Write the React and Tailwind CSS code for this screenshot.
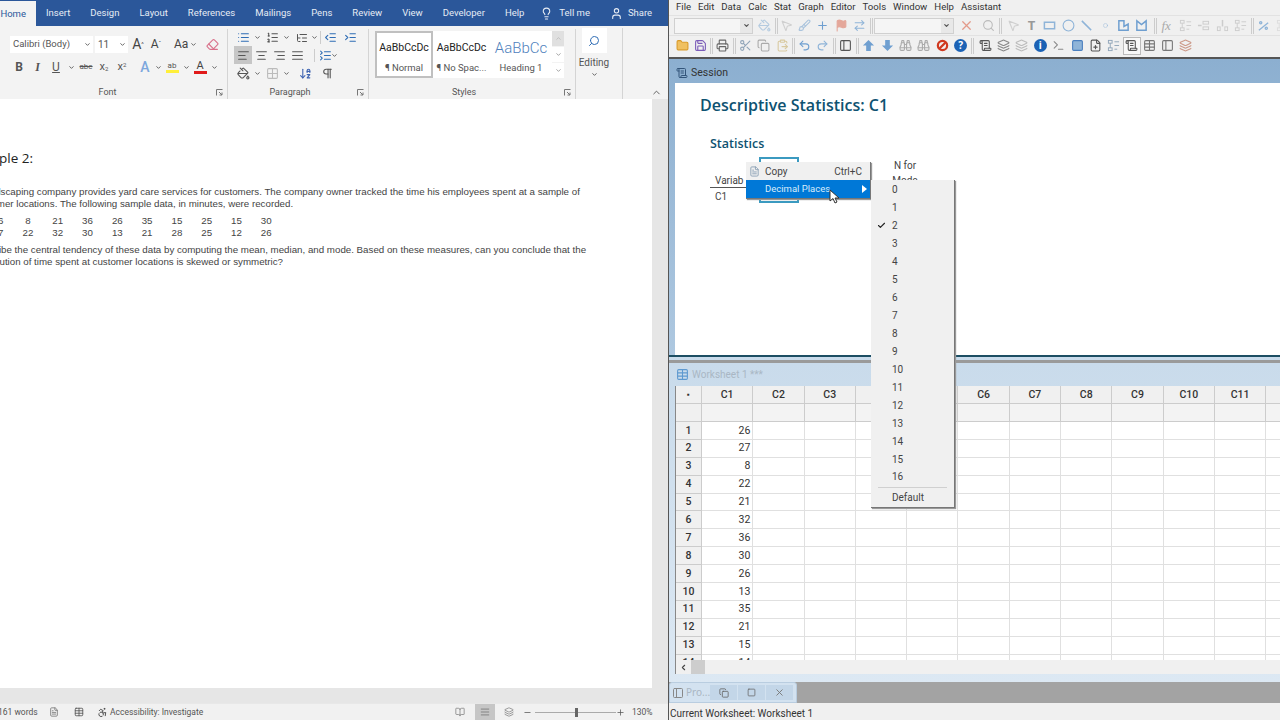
import { AlignCenter, AlignJustify, AlignLeft, AlignRight, ArrowDownAZ, BookOpen, ChevronDown, ChevronLeft, ChevronUp, Circle, ClipboardPaste, Copy, FilePlus, FileText, Folder, Grid2x2, Lightbulb, List, ListOrdered, ListTree, Minus, MousePointer2, PaintBucket, Pilcrow, Plus, Printer, Redo2, Save, Scissors, Search, Square, Table, Undo2, User, X, Flag, ArrowRightLeft, Brush, Binoculars, ScrollText, Layers, PanelLeft, Eraser, Check, IndentDecrease, IndentIncrease, ListCollapse, Accessibility, Terminal } from 'lucide-react';

const word = "font-['Roboto',sans-serif]";

const Caret = ({ w = 'w-[12px]', className = '' }) => <span className={`${w} ${className} flex justify-center text-[#555]`}><ChevronDown size={7} strokeWidth={3} /></span>;

const Launcher = () => (
  <svg width="7" height="7" viewBox="0 0 7 7" className="text-[#777]"><path d="M0.5 0.5h6M0.5 0.5v6M3 3l3 3M6 3.5V6H3.5" fill="none" stroke="currentColor" /></svg>
);

function RibbonIcon({ children, w = 'w-[18px]', active, className = '' }) {
  return <span className={`${w} ${className} h-[18px] flex items-center justify-center text-[#555] ${active ? 'bg-[#c6c6c6]' : ''}`}>{children}</span>;
}

function FontGroup() {
  return (
    <div className="w-[228px] shrink-0 flex flex-col border-r border-[#d4d4d4] mt-[3px] relative">
      <div className="flex items-center pl-[10px] pt-[4px] h-[26px]">
        <div className="w-[83px] h-[17px] bg-white flex items-center justify-between pl-[3px] text-[9.5px] text-[#555]">Calibri (Body)<Caret /></div>
        <div className="ml-[2px] w-[33px] h-[17px] bg-white flex items-center justify-between pl-[3px] text-[10px] text-[#555]">11<Caret /></div>
        <span className="ml-[1px] w-[18px] text-center text-[14px] text-[#444]">A<sup className="text-[6px]">^</sup></span>
        <span className="w-[18px] text-center text-[12px] text-[#444]">A<sup className="text-[6px]">ˇ</sup></span>
        <span className="ml-[9px] w-[15px] text-[12px] text-[#444]">Aa</span>
        <Caret w="w-[8px]" />
        <span className="ml-[4px] w-[22px] flex justify-center text-[#d9708a]"><Eraser size={13} /></span>
      </div>
      <div className="flex items-center pl-[10px] h-[24px] text-[#444]">
        <RibbonIcon><b className="text-[12px]">B</b></RibbonIcon>
        <RibbonIcon w="w-[19px]"><i className="text-[12px] font-['Liberation_Serif',serif] font-bold">I</i></RibbonIcon>
        <RibbonIcon><u className="text-[12px]">U</u></RibbonIcon>
        <Caret />
        <RibbonIcon><s className="text-[8px]">abc</s></RibbonIcon>
        <RibbonIcon><span className="text-[11px]">x<sub className="text-[6px]">2</sub></span></RibbonIcon>
        <RibbonIcon><span className="text-[11px]">x<sup className="text-[6px]">2</sup></span></RibbonIcon>
        <span className="ml-[7px] w-[14px] text-center text-[14px] font-medium text-[#7da7dd]">A</span>
        <Caret />
        <span className="w-[16px] flex flex-col items-center text-[8px] leading-[9px] text-[#555]">ab<span className="w-[13px] h-[3px] bg-[#ffef3a]" /></span>
        <Caret />
        <span className="w-[16px] flex flex-col items-center text-[11px] leading-[11px] text-[#444]">A<span className="w-[13px] h-[3px] bg-[#e01a1a]" /></span>
        <Caret />
      </div>
      <div className="mt-auto flex justify-center items-center h-[14px] pt-[2px] text-[9px] text-[#555] pr-[12px]">Font</div>
      <span className="absolute right-[4px] bottom-[3px]"><Launcher /></span>
    </div>
  );
}

function ParagraphGroup() {
  return (
    <div className="w-[141px] shrink-0 flex flex-col border-r border-[#d4d4d4] mt-[3px] relative">
      <div className="flex items-center pl-[6px] h-[17px]">
        <RibbonIcon><List size={13} className="text-[#2f6db5]" /></RibbonIcon><Caret w="w-[10px]" />
        <RibbonIcon className="ml-[1px]"><ListOrdered size={13} /></RibbonIcon><Caret w="w-[10px]" />
        <RibbonIcon w="w-[14px]" className="ml-[4px]"><ListTree size={12} /></RibbonIcon><Caret w="w-[10px]" />
        <span className="ml-[1px] w-px h-[13px] bg-[#ccc]" />
        <RibbonIcon><IndentDecrease size={13} className="text-[#2f6db5]" /></RibbonIcon>
        <RibbonIcon w="w-[22px]"><IndentIncrease size={13} className="text-[#2f6db5]" /></RibbonIcon>
      </div>
      <div className="flex items-center pl-[6px] h-[18px]">
        <RibbonIcon active><AlignLeft size={13} /></RibbonIcon>
        <RibbonIcon><AlignCenter size={13} /></RibbonIcon>
        <RibbonIcon><AlignRight size={13} /></RibbonIcon>
        <RibbonIcon><AlignJustify size={13} /></RibbonIcon>
        <span className="ml-[8px] w-px h-[13px] bg-[#ccc]" />
        <RibbonIcon w="w-[20px]"><ListCollapse size={13} className="text-[#2f6db5]" /></RibbonIcon>
        <Caret w="w-[10px]" className="-ml-[6px]" />
      </div>
      <div className="flex items-center pl-[6px] h-[18px]">
        <RibbonIcon><PaintBucket size={13} /></RibbonIcon><Caret w="w-[10px]" />
        <RibbonIcon className="ml-[1px]"><Grid2x2 size={13} className="text-[#bbb]" /></RibbonIcon><Caret w="w-[10px]" />
        <RibbonIcon className="ml-[5px]"><ArrowDownAZ size={13} className="text-[#3c62b0]" /></RibbonIcon>
        <RibbonIcon w="w-[26px]"><Pilcrow size={13} /></RibbonIcon>
      </div>
      <div className="mt-auto flex justify-center items-center h-[14px] pt-[2px] text-[9px] text-[#555] pr-[16px]">Paragraph</div>
      <span className="absolute right-[4px] bottom-[3px]"><Launcher /></span>
    </div>
  );
}

function StyleTile({ sample, label, selected, heading, width }) {
  return (
    <div className={`${width} h-full pt-[4px] bg-white flex flex-col items-center justify-center gap-[5px] overflow-hidden ${selected ? 'border-[2px] border-[#c0c0c0]' : ''}`}>
      <span className={heading ? 'text-[15px] leading-[18px] text-[#4f81bd] font-light' : 'text-[10.5px] leading-[18px] text-[#222]'}>{sample}</span>
      <span className="text-[9.5px] leading-[12px] text-[#555] whitespace-nowrap">{label}</span>
    </div>
  );
}

function StylesGroup() {
  return (
    <div className="w-[207px] shrink-0 flex flex-col border-r border-[#d4d4d4] mt-[3px] relative pl-[6px]">
      <div className="flex h-[47px] mt-[2px]">
        <StyleTile selected sample="AaBbCcDc" label="¶ Normal" width="w-[58px]" />
        <StyleTile sample="AaBbCcDc" label="¶ No Spac..." width="w-[57px]" />
        <StyleTile heading sample="AaBbCc" label="Heading 1" width="w-[62px]" />
        <div className="w-[12px] flex flex-col gap-px text-[#666]">
          <span className="flex-1 bg-[#e0e0e0] flex items-center justify-center"><ChevronUp size={7} className="text-[#aaa]" /></span>
          <span className="flex-1 bg-white flex items-center justify-center"><ChevronDown size={7} /></span>
          <span className="flex-1 bg-white flex items-center justify-center"><ChevronDown size={7} /></span>
        </div>
      </div>
      <div className="mt-auto flex justify-center items-center h-[14px] pt-[2px] text-[9px] text-[#555] pr-[22px]">Styles</div>
      <span className="absolute right-[4px] bottom-[3px]"><Launcher /></span>
    </div>
  );
}

function WordPane() {
  const tabs = ['Insert', 'Design', 'Layout', 'References', 'Mailings', 'Pens', 'Review', 'View', 'Developer', 'Help'];
  const row1 = ['26', '8', '21', '36', '26', '35', '15', '25', '15', '30'];
  const row2 = ['27', '22', '32', '30', '13', '21', '28', '25', '12', '26'];
  const dataRow = (vals) => (
    <div className="pl-[26.5px] flex">
      <span className="-ml-[17px] w-[30px] text-center">{vals[0]}</span>
      {vals.slice(1).map((v, i) => <span key={i} className="w-[29.8px] text-center">{v}</span>)}
    </div>
  );
  return (
    <div className={`w-[668px] shrink-0 h-full flex flex-col bg-[#e6e6e6] ${word}`}>
      <div className="h-[26px] shrink-0 bg-[#2b579a] flex items-center text-[9.5px] text-[#e6ecf5] whitespace-nowrap">
        <div className="w-[36px] h-full mt-[2px] mr-[10px] bg-[#f3f3f3] text-[#2b579a] flex items-center justify-end pr-[10px]">Home</div>
        <div className="flex gap-[20px]">{tabs.map((t) => <span key={t}>{t}</span>)}</div>
        <Lightbulb size={13} className="ml-[16px]" />
        <span className="ml-[6px]">Tell me</span>
        <User size={13} className="ml-[20px]" />
        <span className="ml-[5px]">Share</span>
      </div>
      <div className="h-[73px] shrink-0 bg-[#f3f3f3] flex">
        <FontGroup />
        <ParagraphGroup />
        <StylesGroup />
        <div className="w-[47px] shrink-0 flex flex-col items-center mt-[2px] border-r border-[#d4d4d4] pr-[10px]">
          <span className="w-[25px] h-[25px] bg-white flex items-center justify-center text-[#2f6db5]"><Search size={12} className="-scale-x-100" /></span>
          <span className="text-[10px] text-[#555] mt-[2px]">Editing</span>
          <ChevronDown size={7} strokeWidth={3} className="mt-[1px] text-[#555]" />
        </div>
        <div className="flex-1 flex items-end justify-start pl-[28px] pb-[1px] text-[#555]"><ChevronUp size={11} /></div>
      </div>
      <div className="flex-1 flex min-h-0">
        <div className="w-[652px] bg-white overflow-hidden whitespace-nowrap text-[#444] font-['Liberation_Sans',sans-serif] text-[9.74px] leading-[12px]">
          <div className="-ml-[26.5px] pt-[50px]">
            <div className="-ml-[9px] font-['Open_Sans',sans-serif] text-[13.5px] leading-[18px] text-[#222] mb-[19px]">Example 2:</div>
            <div>A landscaping company provides yard care services for customers. The company owner tracked the time his employees spent at a sample of</div>
            <div>customer locations. The following sample data, in minutes, were recorded.</div>
            <div className="mt-[5px]">{dataRow(row1)}{dataRow(row2)}</div>
            <div className="mt-[5px]">Describe the central tendency of these data by computing the mean, median, and mode. Based on these measures, can you conclude that the</div>
            <div>distribution of time spent at customer locations is skewed or symmetric?</div>
          </div>
        </div>
      </div>
      <div className="h-[15px] shrink-0 bg-[#e6e6e6]" />
      <div className="h-[17px] shrink-0 bg-[#f1f1f1] flex items-center text-[8.5px] text-[#555] whitespace-nowrap border-t border-[#e8e8e8]">
        <span className="-ml-[2px] w-[40px]">161 words</span>
        <FileText size={10} className="ml-[11px] text-[#777]" />
        <Table size={10} className="ml-[15px] text-[#555]" />
        <Accessibility size={11} className="ml-[13px] text-[#444]" />
        <span className="ml-[2px] w-[92px]">Accessibility: Investigate</span>
        <BookOpen size={10} className="ml-[253px] text-[#888]" />
        <span className="ml-[10px] w-[20px] h-full bg-[#c6c6c6] flex items-center justify-center"><AlignJustify size={10} className="text-[#777]" /></span>
        <Layers size={10} className="ml-[9px] text-[#888]" />
        <Minus size={9} className="ml-[9px] text-[#555]" />
        <span className="ml-[3px] w-[81px] h-px bg-[#aaa] relative"><span className="absolute left-[40px] -top-[4px] w-[3px] h-[9px] bg-[#666]" /></span>
        <Plus size={9} className="text-[#555]" />
        <span className="ml-[7px]">130%</span>
      </div>
    </div>
  );
}

function ArrowFill({ size, down }) {
  return <svg width={size} height={size} viewBox="0 0 14 14" fill="currentColor" className={down ? 'rotate-180' : ''}><path d="M7 1l6 6H9.5v6h-5V7H1z" /></svg>;
}
const ArrowUpFill = ({ size }) => <ArrowFill size={size} />;
const ArrowDownFill = ({ size }) => <ArrowFill size={size} down />;

function LShape({ size }) {
  return <svg width={size} height={size} viewBox="0 0 14 14" fill="none" stroke="currentColor" strokeWidth="1.6"><path d="M2 2v10h10V5.5L7.5 8V2z" /></svg>;
}
function MShape({ size }) {
  return <svg width={size} height={size} viewBox="0 0 14 14" fill="none" stroke="currentColor" strokeWidth="1.6"><path d="M2 2l5 4 5-4v10H2z" /></svg>;
}
function RectShape({ size }) {
  return <svg width={size} height={size} viewBox="0 0 14 14" fill="none" stroke="currentColor" strokeWidth="1.6"><rect x="1.5" y="3.5" width="11" height="7" /></svg>;
}
function LineShape({ size }) {
  return <svg width={size} height={size} viewBox="0 0 14 14" stroke="currentColor" strokeWidth="1.6"><path d="M2 2l10 10" /></svg>;
}
function Tree({ size }) {
  return <svg width={size} height={size} viewBox="0 0 14 14" fill="none" stroke="currentColor"><rect x="1.5" y="1.5" width="4" height="3" /><rect x="1.5" y="9.5" width="4" height="3" /><path d="M3.5 4.5v5M8 3h5M8 7h5M8 11h3" /></svg>;
}
function Dash({ size }) {
  return <svg width={size} height={size} viewBox="0 0 14 14" fill="none" stroke="currentColor"><path d="M1 7h4" strokeWidth="1.6" /><rect x="6.5" y="2.5" width="6" height="3" /><rect x="6.5" y="8.5" width="6" height="3" /></svg>;
}
function Bars({ size }) {
  return <svg width={size} height={size} viewBox="0 0 14 14" fill="none" stroke="currentColor"><path d="M7 1v7" strokeWidth="1.6" /><rect x="1.5" y="8.5" width="3" height="4" /><rect x="9.5" y="8.5" width="3" height="4" /></svg>;
}
function Stop({ size }) {
  return <svg width={size} height={size} viewBox="0 0 14 14" fill="none" stroke="currentColor" strokeWidth="2.4"><circle cx="7" cy="7" r="5" /><path d="M3.5 10.5l7-7" /></svg>;
}
function Trend({ size }) {
  return <svg width={size} height={size} viewBox="0 0 14 14" fill="none" stroke="currentColor" strokeWidth="1.4"><path d="M2 12L12 4" /><circle cx="4" cy="4" r="1.2" /><circle cx="10" cy="10" r="1.2" /></svg>;
}

function Tool({ icon: Icon, c = 'text-[#8fb4d8]', w = 'w-[18.4px]', sel, size = 13, fill = 'none' }) {
  return <span className={`${w} shrink-0 h-[18px] flex items-center justify-center ${c} ${sel ? 'border border-[#bbb] bg-[#f8f8f8]' : ''}`}><Icon size={size} fill={fill} /></span>;
}

function DotGlyph({ t, bg }) {
  return <span className="w-[18.4px] shrink-0 flex justify-center"><span className={`${bg} w-[13px] h-[13px] rounded-full text-white text-[10px] leading-[13px] font-bold text-center`}>{t}</span></span>;
}

const Sep = ({ w = 'w-[8px]' }) => <span className={`${w} shrink-0 flex justify-center`}><span className="shrink-0 w-[3px] h-[16px] border-x border-[#ccc]" /></span>;

function ToolCombo({ width }) {
  return <div className={`${width} shrink-0 h-[16px] bg-[#f5f5f5] border border-[#d0d0d0] flex justify-end items-center`}><span className="w-[12px] h-full bg-[#e8e8e8] flex items-center justify-center"><ChevronDown size={7} strokeWidth={4} className="text-[#555]" /></span></div>;
}

const Gl = ({ t, className = '' }) => <span className={`shrink-0 ${className}`}>{t}</span>;

function MinitabToolbars() {
  return (
    <div className="bg-[#f0f0f0] shrink-0 pb-[2px]">
      <div className="h-[15px] flex items-center gap-[7px] pl-[7px] text-[9.6px] text-[#333] font-['Roboto',sans-serif] whitespace-nowrap">
        {['File', 'Edit', 'Data', 'Calc', 'Stat', 'Graph', 'Editor', 'Tools', 'Window', 'Help', 'Assistant'].map((m) => <span key={m}>{m}</span>)}
      </div>
      <div className="h-[20px] flex items-center pl-[5px] border-t border-[#e2e2e2] overflow-hidden">
        <ToolCombo width="w-[79px]" />
        <Tool icon={PaintBucket} c="text-[#b4cbe0]" w="w-[22px]" />
        <Sep w="w-[2px]" />
        <Tool icon={MousePointer2} c="text-[#cfcfcf]" />
        <Tool icon={Brush} c="text-[#a9c3dc]" />
        <Tool icon={Plus} c="text-[#6f9fd0]" />
        <Tool icon={Flag} c="text-[#e4a79a]" fill="#e4a79a" />
        <Tool icon={ArrowRightLeft} c="text-[#8fb4d8]" />
        <Sep w="w-[5px]" />
        <ToolCombo width="w-[80px]" />
        <Tool icon={X} c="text-[#e39a8a]" w="w-[26px]" size={15} />
        <Tool icon={Search} c="text-[#bbb]" w="w-[18px]" />
        <Sep w="w-[6px]" />
        <Tool icon={MousePointer2} c="text-[#cfcfcf]" />
        <Gl t="T" className="w-[18.4px] text-[13px] text-center text-[#999] font-bold" />
        <Tool icon={RectShape} c="text-[#8fb4d8]" />
        <Tool icon={Circle} c="text-[#8fb4d8]" />
        <Tool icon={LineShape} c="text-[#8fb4d8]" />
        <Tool icon={Circle} c="text-[#8fb4d8]" size={5} />
        <Tool icon={LShape} c="text-[#6f9fd0]" />
        <Tool icon={MShape} c="text-[#6f9fd0]" />
        <Sep />
        <Gl t="fx" className="w-[14px] text-[13px] text-center italic text-[#aaa] font-['Liberation_Serif',serif]" />
        <span className="w-[3px] shrink-0" />
        <Tool icon={Tree} c="text-[#ccc]" />
        <Tool icon={Dash} c="text-[#ccc]" />
        <Tool icon={Bars} c="text-[#ccc]" />
        <Tool icon={Tree} c="text-[#ccc]" />
        <Sep w="w-[5px]" />
        <Tool icon={Trend} c="text-[#8fb4d8]" />
        <Tool icon={Tree} c="text-[#ddd]" />
        <Tool icon={Dash} c="text-[#ddd]" />
      </div>
      <div className="h-[20px] flex items-center pl-[4px] border-t border-[#e2e2e2]">
        <Tool icon={Folder} c="text-[#d99a28]" fill="#f0c060" />
        <Tool icon={Save} c="text-[#7a5bb8]" />
        <Sep w="w-[4px]" />
        <Tool icon={Printer} c="text-[#666]" />
        <Sep w="w-[4px]" />
        <Tool icon={Scissors} c="text-[#8fa4b8]" />
        <Tool icon={Copy} c="text-[#aaa]" />
        <Tool icon={ClipboardPaste} c="text-[#d8c9a0]" />
        <Sep w="w-[4px]" />
        <Tool icon={Undo2} c="text-[#6f9fd0]" />
        <Tool icon={Redo2} c="text-[#8fb4d8]" />
        <Sep w="w-[4px]" />
        <Tool icon={PanelLeft} c="text-[#555]" />
        <Sep w="w-[5px]" />
        <Tool icon={ArrowUpFill} c="text-[#6f9fd0]" />
        <Tool icon={ArrowDownFill} c="text-[#6f9fd0]" />
        <Tool icon={Binoculars} c="text-[#aaa]" />
        <Tool icon={Binoculars} c="text-[#aaa]" />
        <Tool icon={Stop} c="text-[#d03a20]" />
        <DotGlyph t="?" bg="bg-[#1b62b5]" />
        <Sep w="w-[6px]" />
        <Tool icon={ScrollText} c="text-[#555]" />
        <Tool icon={Layers} c="text-[#888]" />
        <Tool icon={Layers} c="text-[#bbb]" />
        <DotGlyph t="i" bg="bg-[#1b62b5]" />
        <Tool icon={Terminal} c="text-[#888]" />
        <Tool icon={Square} c="text-[#4a7fbf]" fill="#8fb4d8" />
        <Tool icon={FilePlus} c="text-[#555]" />
        <Tool icon={Tree} c="text-[#8fa4b8]" w="w-[18px]" />
        <Tool icon={ScrollText} c="text-[#555]" w="w-[18px]" sel />
        <Tool icon={Table} c="text-[#777]" w="w-[18px]" />
        <Tool icon={PanelLeft} c="text-[#777]" w="w-[18px]" />
        <Tool icon={Layers} c="text-[#c98]" w="w-[18px]" />
      </div>
    </div>
  );
}

function SessionWindow() {
  return (
    <div className="h-[298px] shrink-0 flex flex-col bg-gradient-to-b from-[#8cafd0] to-[#aec8e0] border-t-[2px] border-[#555] pl-[6px] relative">
      <div className="h-[24px] shrink-0 pt-[3px] pl-[1px] flex items-center text-[10.5px] text-[#333] font-['Roboto',sans-serif]">
        <ScrollText size={12} className="text-[#33557a] mr-[3px]" />Session
      </div>
      <div className="flex-1 bg-white pl-[25px] pt-[12px] relative overflow-hidden font-['Open_Sans',sans-serif]">
        <div className="text-[16px] leading-[20px] font-semibold text-[#0e5271]">Descriptive Statistics: C1</div>
        <div className="ml-[10px] mt-[21px] text-[12.5px] leading-[16px] font-semibold text-[#0e5271]">Statistics</div>
        <div className="ml-[10px] mt-[6px] text-[10px] leading-[15px] text-[#444] flex font-['Roboto',sans-serif]">
          <div className="w-[175px] pt-[15px]">
            <div className="pl-[5px] border-b border-[#555] w-[48px] h-[15px]">Variab</div>
            <div className="pl-[5px] mt-[1px]">C1</div>
          </div>
          <div className="w-[40px] text-center">N for<br />Mode</div>
        </div>
      </div>
    </div>
  );
}

function Worksheet() {
  const cols = ['C1', 'C2', 'C3', 'C4', 'C5', 'C6', 'C7', 'C8', 'C9', 'C10', 'C11', 'C12'];
  const data = [26, 27, 8, 22, 21, 32, 36, 30, 26, 13, 35, 21, 15, 14];
  return (
    <div className="flex-1 min-h-0 flex flex-col bg-gradient-to-b from-[#c9dbeb] to-[#dce8f3] border-t-[3px] border-[#9a9a9a] pl-[6px] pb-[8px] font-['Roboto',sans-serif]">
      <div className="h-[23px] shrink-0 pb-[1px] pl-[1px] flex items-center text-[10px] text-[#a9b7c4]">
        <Table size={13} className="text-[#5f9ad0] mr-[3px]" />Worksheet 1 ***
      </div>
      <div className="flex-1 min-h-0 flex flex-col bg-white border-l border-[#888] overflow-hidden">
        <div className="flex-1 min-h-0 overflow-hidden">
          <div className="flex h-[18px] bg-[#f0f0f0] text-[10.5px] font-medium text-[#333]">
            <span className="w-[26px] shrink-0 flex items-center justify-center border-r border-b border-[#ccc] text-[8px]">▪</span>
            {cols.map((c) => <span key={c} className="w-[51.3px] shrink-0 flex items-center justify-center border-r border-b border-[#ccc]">{c}</span>)}
          </div>
          <div className="flex h-[18px]">
            <span className="w-[26px] shrink-0 bg-[#f0f0f0] border-r border-b border-[#ccc]" />
            {cols.map((c) => <span key={c} className="w-[51.3px] shrink-0 border-r border-b border-[#ccc] bg-[#f3f3f3]" />)}
          </div>
          {data.map((v, i) => (
            <div key={i} className="flex h-[17.9px] text-[10.5px] text-[#333]">
              <span className="w-[26px] shrink-0 bg-[#f0f0f0] flex items-center justify-center font-medium border-r border-b border-[#ccc]">{i + 1}</span>
              {cols.map((c, j) => <span key={c} className="w-[51.3px] shrink-0 flex items-center justify-end pr-[2px] border-r border-b border-[#e0e0e0]">{j === 0 ? v : ''}</span>)}
            </div>
          ))}
        </div>
        <div className="h-[14px] shrink-0 bg-[#f0f0f0] flex items-center">
          <span className="w-[15px] flex justify-center text-[#444]"><ChevronLeft size={9} strokeWidth={3} /></span>
          <span className="w-[14px] h-full bg-[#cdcdcd]" />
        </div>
      </div>
    </div>
  );
}

function ContextMenus() {
  const places = Array.from({ length: 17 }, (_, i) => i);
  return (
    <div className="font-['Roboto',sans-serif] text-[10px] text-[#444]">
      <div className="absolute left-[90px] top-[157px] w-[40px] h-[46px] border-2 border-[#3b9ac0] bg-white flex items-end justify-center text-[9px] leading-[10px] text-[#777]">23.65</div>
      <div className="absolute left-[146px] top-[192px] w-[14px] overflow-hidden text-[9px] leading-[10px] text-[#777]">25.50</div>
      <div className="absolute left-[77px] top-[162px] w-[125px] h-[37px] bg-[#f0f0f0] border-b border-r border-[#777] shadow-[1px_1px_1px_#999]">
        <div className="h-[18px] flex items-center pl-[3px]">
          <FileText size={11} className="text-[#8aa0b5]" />
          <span className="ml-[5px]">Copy</span>
          <span className="ml-auto pr-[8px]">Ctrl+C</span>
        </div>
        <div className="h-[18px] flex items-center bg-[#0078d7] text-[#d8ecfb] text-[9.5px] pl-[19px]">
          Decimal Places
          <span className="ml-auto mr-[3px] w-0 h-0 border-y-[4px] border-y-transparent border-l-[5px] border-l-white" />
        </div>
      </div>
      <div className="absolute left-[202px] top-[180px] w-[84px] pt-px bg-[#f0f0f0] border-b border-r border-[#777] shadow-[1px_1px_1px_#999]">
        {places.map((p) => (
          <div key={p} className="h-[17.95px] flex items-center pl-[21px] relative">
            {p === 2 && <Check size={9} strokeWidth={3} className="absolute left-[6px] text-[#222]" />}
            {p}
          </div>
        ))}
        <div className="mx-[7px] my-[1px] h-px bg-[#d0d0d0]" />
        <div className="h-[18px] flex items-center pl-[21px]">Default</div>
      </div>
      <svg className="absolute left-[160px] top-[189px]" width="12" height="16" viewBox="0 0 12 16"><path d="M1 1v11l3-2.5 2 4.5 2-1-2-4h4z" fill="#fff" stroke="#333" strokeWidth="1" /></svg>
    </div>
  );
}

export default function App() {
  return (
    <div className="w-[1280px] h-[720px] overflow-hidden flex bg-white relative">
      <WordPane />
      <div className="w-[612px] h-full flex flex-col relative border-l border-[#555]">
        <MinitabToolbars />
        <SessionWindow />
        <div className="h-[5px] shrink-0 border-t-[2px] border-[#1c4e63] bg-[#c9dbeb]" />
        <Worksheet />
        <div className="h-[21px] shrink-0 bg-[#a3a3a3] flex">
          <div className="w-[128px] bg-[#d3e2f0] border border-[#b9cde0] rounded-t-[3px] flex items-center text-[10px] text-[#aab6c2] pl-[2px]">
            <PanelLeft size={12} className="text-[#888]" /><span className="ml-[2px] w-[24px]">Pro...</span>
            <span className="w-[27px] h-[15px] bg-[#c3d6e8] flex items-center justify-center mr-[1px]"><Copy size={10} className="text-[#666]" /></span>
            <span className="w-[27px] h-[15px] bg-[#c3d6e8] flex items-center justify-center mr-[1px]"><Square size={9} className="text-[#666]" /></span>
            <span className="w-[27px] h-[15px] bg-[#c3d6e8] flex items-center justify-center"><X size={11} className="text-[#777]" /></span>
          </div>
        </div>
        <div className="h-[17px] shrink-0 bg-[#f0f0f0] flex items-center pl-[1px] pt-[3px] text-[10px] text-[#333] font-['Roboto',sans-serif]">Current Worksheet: Worksheet 1</div>
        <ContextMenus />
      </div>
    </div>
  );
}
